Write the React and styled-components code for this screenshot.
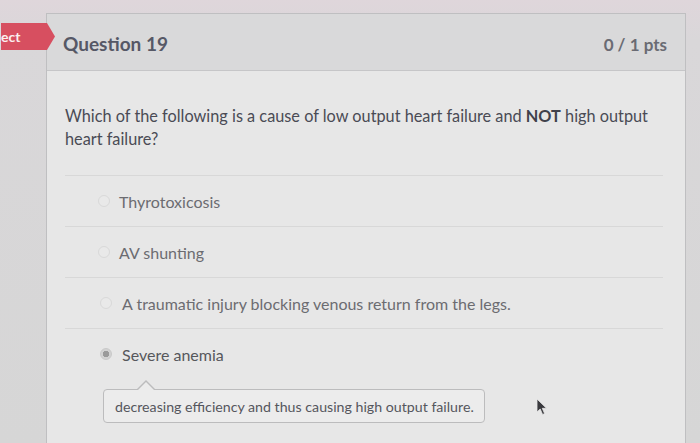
import React from "react";
import styled, { createGlobalStyle } from "styled-components";

const GlobalStyle = createGlobalStyle`
  html, body {
    margin: 0;
    padding: 0;
    height: 100%;
    overflow: hidden;
  }
  body {
    font-family: Lato, "Open Sans", "Liberation Sans", sans-serif;
    background: linear-gradient(180deg, #dfd6db 0px, #d9d7d9 40px, #d6d6d6 100%);
  }
`;

const Page = styled.div`
  padding: 13px 14px 0 46px;
  height: 443px;
  box-sizing: border-box;
`;

const Panel = styled.section`
  position: relative;
  border: 1px solid #bfbfc1;
  border-bottom: none;
  background: #e7e7e7;
  height: 430px;
`;

const Badge = styled.div`
  position: absolute;
  left: -46px;
  top: 9px;
  height: 27px;
  width: 54px;
  background: #d74f60;
  clip-path: polygon(0 0, 46px 0, 54px 50%, 46px 100%, 0 100%);
  color: #fbeff0;
  font-weight: 700;
  font-size: 14px;
  display: flex;
  align-items: center;
  padding-left: 0;
  box-sizing: border-box;
`;

const Header = styled.header`
  height: 56px;
  display: flex;
  align-items: center;
  justify-content: space-between;
  padding: 0 18px 0 16px;
  background: #d9d9da;
  border-bottom: 1px solid #c6c6c8;
  color: #595a66;
`;

const Title = styled.h2`
  margin: 0;
  font-size: 19px;
  font-weight: 700;
  color: #565866;
  padding-top: 2px;
`;

const Points = styled.span`
  font-size: 17px;
  font-weight: 700;
  color: #6a6b73;
  padding-top: 4px;
`;

const Body = styled.div`
  padding: 33px 22px 0 18px;
`;

const Prompt = styled.p`
  margin: 0;
  max-width: 590px;
  font-size: 16.3px;
  line-height: 23px;
  color: #4a4b55;
  strong {
    font-weight: 700;
    color: #40414b;
  }
`;

const Answers = styled.ul`
  list-style: none;
  margin: 25px 0 0;
  padding: 0;
  border-top: 1px solid #d8d8d8;
`;

const Row = styled.li`
  height: 50px;
  display: flex;
  align-items: center;
  padding-left: ${(p) => (p.$wide ? 35 : 33)}px;
  gap: ${(p) => (p.$wide ? 10 : 9)}px;
  border-bottom: 1px solid ${(p) => (p.$last ? "transparent" : "#d8d8d8")};
  font-size: 16px;
  color: ${(p) => (p.$selected ? "#56575c" : "#6c6c71")};
`;

const Radio = styled.span`
  width: 12px;
  height: 12px;
  border-radius: 50%;
  flex: none;
  box-sizing: border-box;
  border: 1px solid ${(p) => (p.$checked ? "#c9c9c9" : "#d9d9d9")};
  background: ${(p) =>
    p.$checked
      ? "radial-gradient(circle, #9a9a9a 0 3px, #d2d2d2 3.5px)"
      : "#e9e9e9"};
`;

const Feedback = styled.div`
  position: relative;
  margin: 9px 0 0 38px;
  width: 382px;
  height: 34px;
  box-sizing: border-box;
  border: 1px solid #bcbcbd;
  border-radius: 4px;
  background: #ececec;
  display: flex;
  align-items: center;
  padding-left: 11px;
  font-size: 14.2px;
  color: #55565d;
  &::before,
  &::after {
    content: "";
    position: absolute;
    left: 32px;
    border-left: 10px solid transparent;
    border-right: 10px solid transparent;
  }
  &::before {
    top: -10px;
    border-bottom: 10px solid #bcbcbd;
  }
  &::after {
    top: -8.5px;
    border-bottom: 10px solid #ececec;
  }
`;

const Pointer = styled.svg`
  position: absolute;
  left: 489px;
  top: 384px;
`;

const answers = [
  { text: "Thyrotoxicosis" },
  { text: "AV shunting" },
  { text: "A traumatic injury blocking venous return from the legs.", wide: true },
  { text: "Severe anemia", wide: true, selected: true },
];

export default function App() {
  return (
    <>
      <GlobalStyle />
      <Page>
        <Panel>
          <Badge>ect</Badge>
          <Header>
            <Title>Question 19</Title>
            <Points>0 / 1 pts</Points>
          </Header>
          <Body>
            <Prompt>
              Which of the following is a cause of low output heart failure and{" "}
              <strong>NOT</strong> high output heart failure?
            </Prompt>
            <Answers>
              {answers.map((a, i) => (
                <Row
                  key={a.text}
                  $wide={a.wide}
                  $selected={a.selected}
                  $last={i === answers.length - 1}
                >
                  <Radio $checked={a.selected} />
                  {a.text}
                </Row>
              ))}
            </Answers>
            <Feedback>decreasing efficiency and thus causing high output failure.</Feedback>
          </Body>
          <Pointer width="12" height="18" viewBox="0 0 12 18">
            <path d="M1 1 L1 14 L4.2 11 L6.6 16.5 L8.6 15.6 L6.3 10.3 L10.5 10.3 Z" fill="#3a3a3e" stroke="#e8e8e8" strokeWidth="0.8" />
          </Pointer>
        </Panel>
      </Page>
    </>
  );
}
